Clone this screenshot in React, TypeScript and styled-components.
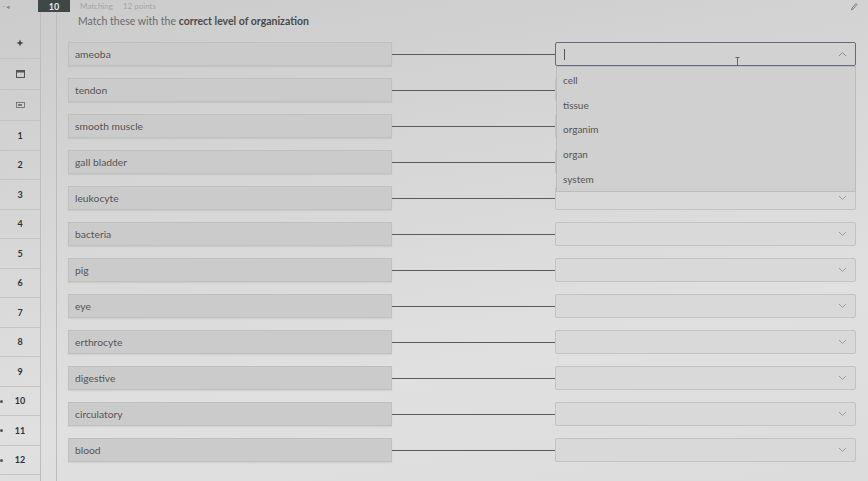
import React from 'react';
import styled, {createGlobalStyle} from 'styled-components';

const GlobalStyle = createGlobalStyle`
  html, body {
    margin: 0;
    padding: 0;
  }
  body {
    font-family: Lato, "Open Sans", sans-serif;
    background: #d6d6d6;
  }
`;

const Page = styled.div`
  width: 868px;
  height: 481px;
  overflow: hidden;
  display: flex;
  flex-direction: column;
  background: linear-gradient(170deg, #cbcbcb 0%, #d6d6d6 35%, #e0e0e0 70%, #dcdcdc 100%);
  color: #444;
`;

const TopStrip = styled.div`
  height: 12px;
  display: flex;
  align-items: center;
  font-size: 8px;
  color: #9a9a9a;
`;

const BackMark = styled.span`
  width: 36px;
  padding-left: 2px;
  font-size: 7px;
  color: #888;
`;

const Badge = styled.div`
  width: 32px;
  height: 12px;
  background: #3e4848;
  color: #e8e8e8;
  font-size: 9px;
  font-weight: 700;
  display: flex;
  align-items: center;
  justify-content: center;
`;

const TopLabel = styled.span<{$gap: number}>`
  margin-left: ${p => p.$gap}px;
  color: #a5a5a5;
`;

const PencilSlot = styled.div`
  margin-left: auto;
  margin-right: 10px;
  display: flex;
  align-items: center;
`;

const Body = styled.div`
  flex: 1;
  display: flex;
  flex-direction: row;
  min-height: 0;
`;

const Sidebar = styled.div`
  width: 40px;
  border-right: 1px solid #bdbdbd;
  padding-top: 16px;
  display: flex;
  flex-direction: column;
`;

const SideCell = styled.div<{$h: number}>`
  height: ${p => p.$h}px;
  border-bottom: 1px solid #c4c4c4;
  display: flex;
  align-items: center;
  justify-content: center;
  font-size: 9px;
  font-weight: 700;
  color: #333;
  box-sizing: border-box;
  position: relative;
`;

const Dot = styled.span`
  position: absolute;
  left: 0;
  top: 50%;
  width: 3px;
  height: 3px;
  margin-top: -1px;
  border-radius: 50%;
  background: #555;
`;

const Gutter = styled.div`
  width: 15px;
  border-right: 1px solid #bcbcbc;
`;

const Main = styled.div`
  flex: 1;
  padding-left: 11px;
  display: flex;
  flex-direction: column;
`;

const Title = styled.div`
  margin-left: 10px;
  margin-top: 3px;
  height: 15px;
  font-size: 10.5px;
  color: #6a6a6a;
`;

const Strong = styled.span`
  color: #4a4a4a;
  font-weight: 700;
`;

const Rows = styled.div`
  margin-top: 12px;
  display: flex;
  flex-direction: column;
  gap: 12px;
`;

const Row = styled.div`
  display: flex;
  flex-direction: row;
  align-items: center;
  height: 24px;
`;

const Term = styled.div`
  width: 324px;
  height: 24px;
  box-sizing: border-box;
  background: #cbcbcb;
  border: 1px solid #c0c0c0;
  box-shadow: 0 1px 1px rgba(0, 0, 0, 0.06);
  padding-left: 6px;
  display: flex;
  align-items: center;
  font-size: 10.3px;
  color: #555;
`;

const Connector = styled.div`
  width: 163px;
  height: 1px;
  background: #5a5a5a;
`;

const Select = styled.div<{$open?: boolean}>`
  width: 301px;
  height: 24px;
  box-sizing: border-box;
  border: 1px solid ${p => (p.$open ? '#626a86' : '#c3c3c3')};
  border-radius: 2px;
  background: ${p => (p.$open ? '#d2d2d2' : '#d9d9d9')};
  display: flex;
  align-items: center;
  padding: 0 8px 0 8px;
  position: relative;
`;

const Caret = styled.span`
  width: 1px;
  height: 11px;
  background: #555;
`;

const ChevronSlot = styled.div`
  margin-left: auto;
  display: flex;
  align-items: center;
`;

const IBeam = styled.div`
  position: absolute;
  left: 179px;
  top: 8px;
`;

const Menu = styled.div`
  position: absolute;
  left: 0;
  top: 100%;
  margin-top: 1px;
  width: 300px;
  box-sizing: border-box;
  background: #d0d0d0;
  border: 1px solid #bcbcbc;
  z-index: 2;
  padding-top: 1px;
`;

const Option = styled.div`
  height: 24.6px;
  display: flex;
  align-items: center;
  padding-left: 6px;
  font-size: 10px;
  color: #555;
`;

const Chevron: React.FC<{up?: boolean}> = ({up}) => (
  <svg width="9" height="6" viewBox="0 0 9 6">
    <path
      d={up ? 'M1 5 L4.5 1.5 L8 5' : 'M1 1 L4.5 4.5 L8 1'}
      fill="none"
      stroke={up ? '#888' : '#9a9a9a'}
      strokeWidth="1"
    />
  </svg>
);

const Pencil: React.FC = () => (
  <svg width="8" height="9" viewBox="0 0 8 9">
    <path d="M1.5 8 L2 6 L6 1.5 L7 2.5 L3 7 Z" fill="none" stroke="#777" strokeWidth="0.9" />
  </svg>
);

const PinIcon: React.FC = () => (
  <svg width="8" height="8" viewBox="0 0 8 8">
    <path d="M4 0.5 L5 3 L7.5 4 L5 5 L4 7.5 L3 5 L0.5 4 L3 3 Z" fill="#444" />
  </svg>
);

const BoxIcon: React.FC = () => (
  <svg width="9" height="8" viewBox="0 0 9 8">
    <rect x="0.5" y="0.5" width="8" height="7" fill="none" stroke="#555" strokeWidth="1" />
    <rect x="0.5" y="0.5" width="8" height="2" fill="#555" />
  </svg>
);

const CardIcon: React.FC = () => (
  <svg width="9" height="6" viewBox="0 0 9 6">
    <rect x="0.5" y="0.5" width="8" height="5" fill="none" stroke="#666" strokeWidth="0.8" />
    <rect x="2" y="2" width="4" height="2" fill="#777" />
  </svg>
);

const terms = [
  'ameoba',
  'tendon',
  'smooth muscle',
  'gall bladder',
  'leukocyte',
  'bacteria',
  'pig',
  'eye',
  'erthrocyte',
  'digestive',
  'circulatory',
  'blood',
];

const options = ['cell', 'tissue', 'organim', 'organ', 'system'];

export default function App() {
  const iconCells = [<PinIcon key="pin" />, <BoxIcon key="box" />, <CardIcon key="card" />];

  return (
    <>
      <GlobalStyle />
      <Page>
        <TopStrip>
          <BackMark>- ◂</BackMark>
          <Badge>10</Badge>
          <TopLabel $gap={10}>Matching</TopLabel>
          <TopLabel $gap={10}>12 points</TopLabel>
          <PencilSlot>
            <Pencil />
          </PencilSlot>
        </TopStrip>
        <Body>
          <Sidebar>
            {iconCells.map((icon, i) => (
              <SideCell key={i} $h={31}>
                {icon}
              </SideCell>
            ))}
            {terms.map((_, i) => (
              <SideCell key={i} $h={29.5}>
                {i >= 9 && <Dot />}
                {i + 1}
              </SideCell>
            ))}
          </Sidebar>
          <Gutter />
          <Main>
            <Title>
              Match these with the <Strong>correct level of organization</Strong>
            </Title>
            <Rows>
              {terms.map((term, i) => (
                <Row key={term}>
                  <Term>{term}</Term>
                  <Connector />
                  {i === 0 ? (
                    <Select $open>
                      <Caret />
                      <IBeam>
                        <svg width="5" height="10" viewBox="0 0 5 10">
                          <path d="M0.5 0.5 H4.5 M2.5 0.5 V9.5 M0.5 9.5 H4.5" stroke="#666" strokeWidth="1" fill="none" />
                        </svg>
                      </IBeam>
                      <ChevronSlot>
                        <Chevron up />
                      </ChevronSlot>
                      <Menu>
                        {options.map(o => (
                          <Option key={o}>{o}</Option>
                        ))}
                      </Menu>
                    </Select>
                  ) : (
                    <Select>
                      <ChevronSlot>
                        <Chevron />
                      </ChevronSlot>
                    </Select>
                  )}
                </Row>
              ))}
            </Rows>
          </Main>
        </Body>
      </Page>
    </>
  );
}
